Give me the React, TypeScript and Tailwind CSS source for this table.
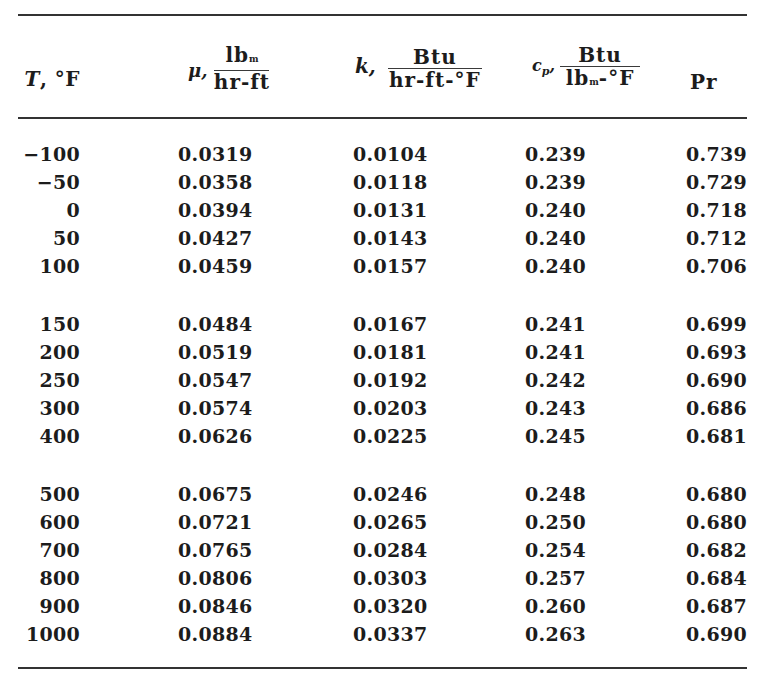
const groups: string[][][] = [
  [
    ['−100', '0.0319', '0.0104', '0.239', '0.739'],
    ['−50', '0.0358', '0.0118', '0.239', '0.729'],
    ['0', '0.0394', '0.0131', '0.240', '0.718'],
    ['50', '0.0427', '0.0143', '0.240', '0.712'],
    ['100', '0.0459', '0.0157', '0.240', '0.706'],
  ],
  [
    ['150', '0.0484', '0.0167', '0.241', '0.699'],
    ['200', '0.0519', '0.0181', '0.241', '0.693'],
    ['250', '0.0547', '0.0192', '0.242', '0.690'],
    ['300', '0.0574', '0.0203', '0.243', '0.686'],
    ['400', '0.0626', '0.0225', '0.245', '0.681'],
  ],
  [
    ['500', '0.0675', '0.0246', '0.248', '0.680'],
    ['600', '0.0721', '0.0265', '0.250', '0.680'],
    ['700', '0.0765', '0.0284', '0.254', '0.682'],
    ['800', '0.0806', '0.0303', '0.257', '0.684'],
    ['900', '0.0846', '0.0320', '0.260', '0.687'],
    ['1000', '0.0884', '0.0337', '0.263', '0.690'],
  ],
];

const cols = 'grid grid-cols-[62px_273px_172px_161px_1fr]';

function Fraction({ top, bottom, width }: { top: React.ReactNode; bottom: React.ReactNode; width: string }) {
  return (
    <span className={`inline-flex flex-col items-center ${width}`}>
      <span className="leading-[21px] tracking-[1px] whitespace-nowrap">{top}</span>
      <span className="w-full border-t-[1.5px] border-[#3a3a3a]" />
      <span className="leading-[22px] tracking-[1px] whitespace-nowrap">{bottom}</span>
    </span>
  );
}

const Lbm = () => (
  <>
    lb<span className="text-[9px] tracking-normal">m</span>
  </>
);

export default function App() {
  return (
    <div className="min-h-[674px] bg-white text-[#1c1c1c] font-['DejaVu_Serif',serif] font-bold">
      <div className="ml-[18px] w-[729px] pt-[14px]">
        <div className="h-[2px] bg-[#333]" />

        {/* header */}
        <div className={`${cols} h-[101px] text-[20px]`}>
          <div className="flex items-center justify-end">
            <span className="mt-[24px] leading-[24px] whitespace-nowrap tracking-[0.5px]">
              <i>T</i>, °F
            </span>
          </div>
          <div className="flex items-center pl-[108px]">
            <span className="mt-[8px] text-[18px] italic leading-[20px]">μ,</span>
            <span className="ml-[7px]">
              <Fraction top={<Lbm />} bottom="hr-ft" width="w-[55px]" />
            </span>
          </div>
          <div className="flex items-center pl-[2px]">
            <span className="-mt-[2px] italic leading-[20px]">k,</span>
            <span className="ml-[12px]">
              <Fraction top="Btu" bottom="hr-ft-°F" width="w-[94px]" />
            </span>
          </div>
          <div className="flex items-center pl-[7px]">
            <span className="-mt-[2px] text-[16px] italic leading-[18px]">
              c<sub className="text-[11px] align-[-2px]">p</sub>,
            </span>
            <span className="ml-[5px]">
              <Fraction top="Btu" bottom={<>
                <Lbm />-°F
              </>} width="w-[80px]" />
            </span>
          </div>
          <div className="flex items-center pl-[4px]">
            <span className="mt-[30px] leading-[24px] tracking-[1px]">Pr</span>
          </div>
        </div>

        <div className="h-[2px] bg-[#333]" />

        {/* body */}
        <div className="pt-[21px] text-[19px] flex flex-col gap-[30px]">
          {groups.map((g, gi) => (
            <div key={gi}>
              {g.map((r) => (
                <div key={r[0]} className={`${cols} h-[28px] leading-[28px] tracking-[0.3px]`}>
                  <div className="text-right">{r[0]}</div>
                  <div className="pl-[98px]">{r[1]}</div>
                  <div>{r[2]}</div>
                  <div>{r[3]}</div>
                  <div>{r[4]}</div>
                </div>
              ))}
            </div>
          ))}
        </div>

        <div className="mt-[19px] h-[2px] bg-[#333]" />
      </div>
    </div>
  );
}
